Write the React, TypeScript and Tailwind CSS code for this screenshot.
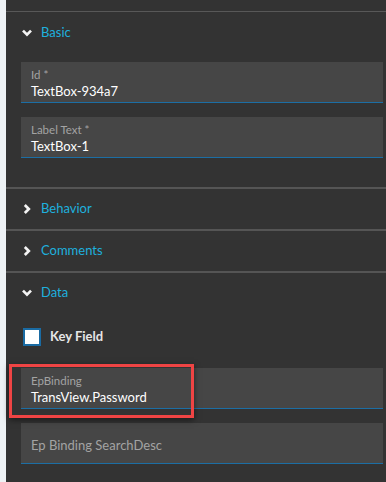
import React from "react";

function Chevron({ open }: { open: boolean }) {
  return (
    <svg width="10" height="10" viewBox="0 0 10 10" className="shrink-0 overflow-visible">
      {open ? (
        <path d="M1 2.6 L5 6.6 L9 2.6" fill="none" stroke="#f4f4f4" strokeWidth="2.7" />
      ) : (
        <path d="M2.8 1 L6.8 5 L2.8 9" fill="none" stroke="#f4f4f4" strokeWidth="2.7" />
      )}
    </svg>
  );
}

function SectionHeader({ title, open, tall }: { title: string; open: boolean; tall?: boolean }) {
  return (
    <div className={`flex items-center ${tall ? "h-[41px]" : "h-[40px]"} pl-[16px] gap-[9px]`}>
      <Chevron open={open} />
      <span className="text-[13px] text-[#1eb0de]">{title}</span>
    </div>
  );
}

function Field({ label, value }: { label: string; value?: string }) {
  if (!value) {
    return (
      <div className="h-[41px] bg-[#464646] border-b border-[#1c6ea4] flex items-center pl-[10px] pt-[7px]">
        <span className="text-[13px] text-[#a3a3a3]">{label}</span>
      </div>
    );
  }
  return (
    <div className="h-[41px] bg-[#464646] border-b border-[#1c6ea4] flex flex-col pl-[10px] pt-[5px]">
      <span className="text-[11.5px] leading-[15px] text-[#a3a3a3]">{label}</span>
      <span className="text-[13px] leading-[18px] text-white">{value}</span>
    </div>
  );
}

export default function App() {
  return (
    <div
      className="w-[386px] h-[482px] flex bg-[#eef2f5] overflow-hidden"
      style={{ fontFamily: "Lato, 'Open Sans', sans-serif" }}
    >
      <div className="w-[6px] shrink-0" />
      <div className="flex-1 bg-[#333333] flex flex-col pr-[3px]">
        <div className="h-[11px]" />
        <div className="h-px bg-[#585858] -mr-[3px]" />
        <SectionHeader title="Basic" open tall />
        <div className="flex flex-col gap-[14px] pl-[15px] pt-[9px]">
          <Field label="Id *" value="TextBox-934a7" />
          <Field label="Label Text *" value="TextBox-1" />
        </div>
        <div className="h-[29px]" />
        <div className="h-[2px] bg-[#555555] -mr-[3px]" />
        <SectionHeader title="Behavior" open={false} />
        <div className="h-[2px] bg-[#555555] -mr-[3px]" />
        <SectionHeader title="Comments" open={false} />
        <div className="h-[2px] bg-[#555555] -mr-[3px]" />
        <SectionHeader title="Data" open />
        <div className="flex items-center gap-[9px] pl-[17px] mt-[14px]">
          <div className="w-[18px] h-[18px] bg-white border-2 border-[#1a6ba3]" />
          <span className="text-[13px] font-bold text-[#e6e6e6]">Key Field</span>
        </div>
        <div className="relative flex flex-col gap-[14px] pl-[15px] mt-[21px]">
          <Field label="EpBinding" value="TransView.Password" />
          <Field label="Ep Binding SearchDesc" />
          <div className="absolute left-[3px] top-[-4px] w-[185px] h-[54px] border-[3px] border-[#ef4444] shadow-[0_2px_6px_rgba(0,0,0,0.5)]" />
        </div>
      </div>
    </div>
  );
}
